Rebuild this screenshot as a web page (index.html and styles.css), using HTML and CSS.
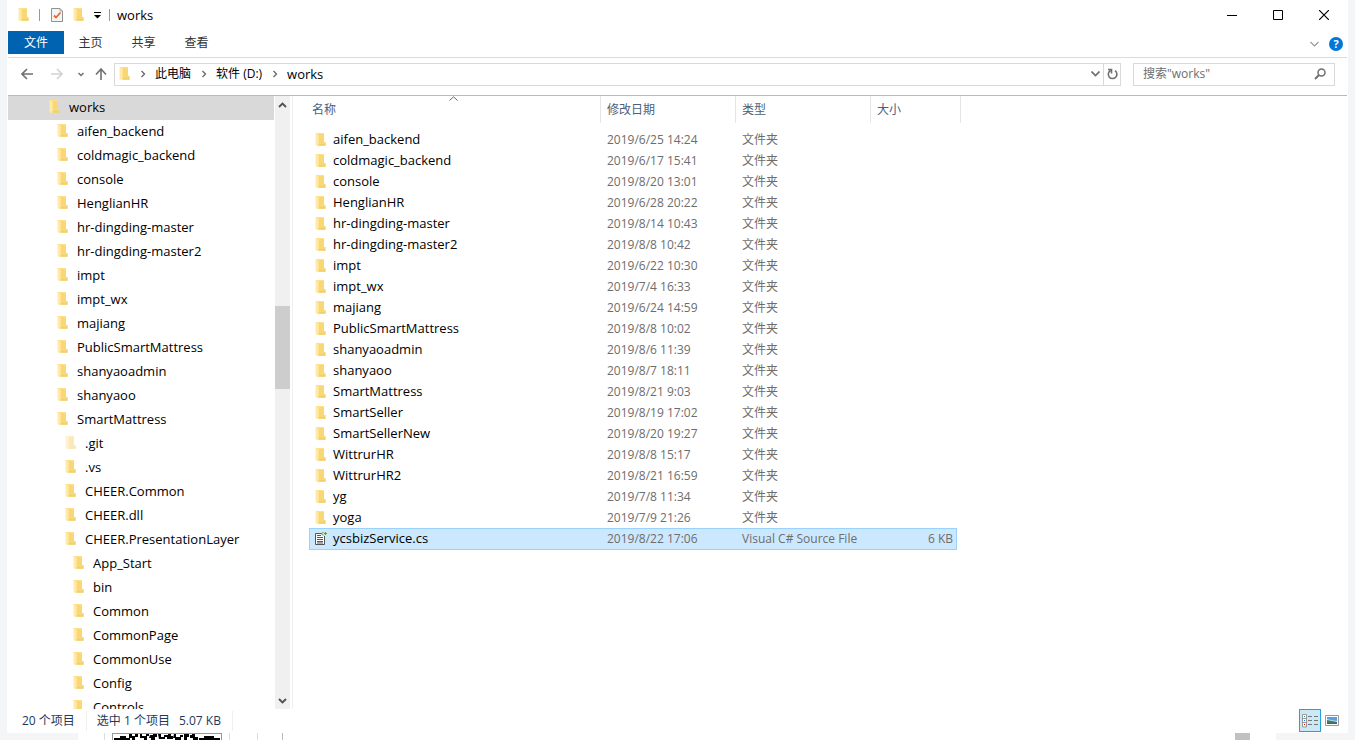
FILE: index.html
```html
<!DOCTYPE html>
<html lang="zh-CN">
<head>
<meta charset="utf-8">
<title>works</title>
<link rel="stylesheet" href="styles.css">
</head>
<body>
<svg class="sprite" aria-hidden="true">
  <symbol id="folder" viewBox="0 0 11 14">
    <path d="M1 0h8v9h1.500v3.500H3.500L1 12z" fill="#ffdf87"/>
    <path d="M3.500 1H9v8h1.500v3.500H3.500z" fill="#f8d775"/>
    <path d="M0.500 0L3.500 1.500V13.500L0.500 12z" fill="#ffe9a8"/>
    <path d="M3.500 11.500h7v1h-7z" fill="#edc85f"/>
  </symbol>
  <symbol id="crumb" viewBox="0 0 6 8"><path d="M1.500 1L4.500 4L1.500 7" fill="none" stroke="#666" stroke-width="1.300"/></symbol>
</svg>
<main class="window">
  <header class="titlebar">
    <svg class="folder"><use href="#folder"/></svg>
    <span class="divider"></span>
    <button class="tool" aria-label="属性"><svg width="12" height="14" viewBox="0 0 12 14"><path d="M.5.5h8.500l2.500 2.500v10.500H.5z" fill="#f4f4f4" stroke="#919191"/><path d="M9 .5V3h2.500" fill="none" stroke="#aaa"/><path d="M3 7.500L5 9.500L9.500 4.500" fill="none" stroke="#e8682c" stroke-width="1.800"/></svg></button>
    <button class="tool" aria-label="新建文件夹"><svg class="folder"><use href="#folder"/></svg></button>
    <button class="tool menu" aria-label="自定义快速访问工具栏"><svg width="7" height="7" viewBox="0 0 7 7"><path d="M0 0h7v1H0zM0 3h7L3.500 6.500z"/></svg></button>
    <span class="divider"></span>
    <h1 class="title">works</h1>
    <div class="controls">
      <button aria-label="最小化"><svg width="10" height="10"><path d="M0 5h10v1H0z"/></svg></button>
      <button aria-label="最大化"><svg width="10" height="10"><path d="M.5.5h9v9h-9z" fill="none" stroke="#000"/></svg></button>
      <button aria-label="关闭"><svg width="10" height="10"><path d="M0 0L10 10M10 0L0 10" fill="none" stroke="#000" stroke-width="1.200"/></svg></button>
    </div>
  </header>
  <nav class="ribbon">
    <button class="tab file">文件</button>
    <button class="tab">主页</button>
    <button class="tab">共享</button>
    <button class="tab">查看</button>
    <div class="ribbon-end">
      <button class="tool" aria-label="展开功能区"><svg width="9" height="6"><path d="M.5 1L4.500 5L8.500 1" fill="none" stroke="#999" stroke-width="1.200"/></svg></button>
      <button class="help" aria-label="帮助">?</button>
    </div>
  </nav>
  <div class="location">
    <div class="history">
      <button class="tool" aria-label="后退"><svg width="12" height="12"><path d="M12 6H1.500M6 1L1 6L6 11" fill="none" stroke="#707070" stroke-width="1.600"/></svg></button>
      <button class="tool" aria-label="前进"><svg width="12" height="12"><path d="M0 6H10.500M6 1L11 6L6 11" fill="none" stroke="#d2d2d2" stroke-width="1.600"/></svg></button>
      <button class="tool" aria-label="最近位置"><svg width="6" height="5"><path d="M.5 1L3 3.500L5.500 1" fill="none" stroke="#707070" stroke-width="1.500"/></svg></button>
      <button class="tool" aria-label="上移"><svg width="12" height="12"><path d="M6 12V1.500M1 6.500L6 1L11 6.500" fill="none" stroke="#707070" stroke-width="1.600"/></svg></button>
    </div>
    <div class="address">
      <svg class="folder"><use href="#folder"/></svg>
      <svg class="crumb"><use href="#crumb"/></svg>
      <a href="#pc">此电脑</a>
      <svg class="crumb"><use href="#crumb"/></svg>
      <a href="#d">软件 (D:)</a>
      <svg class="crumb"><use href="#crumb"/></svg>
      <a class="here" href="#works">works</a>
      <button class="drop" aria-label="以前的位置"><svg width="9" height="6"><path d="M.5.500L4.500 4.500L8.500.500" fill="none" stroke="#707070" stroke-width="1.700"/></svg></button>
      <button class="refresh" aria-label="刷新"><svg width="11" height="12"><path d="M3.500 2.500A4.300 4.300 0 1 0 8 2.700M1 1.500H4.500V5.500" fill="none" stroke="#707070" stroke-width="1.600"/></svg></button>
    </div>
    <label class="search">
      <input type="text" placeholder='搜索"works"' aria-label="搜索">
      <svg width="12" height="12"><circle cx="7.500" cy="4.500" r="3.500" fill="none" stroke="#707070" stroke-width="1.500"/><path d="M5 7L1 11" stroke="#707070" stroke-width="2"/></svg>
    </label>
  </div>
  <div class="content">
    <ul class="tree">
      <li class="current"><svg class="folder"><use href="#folder"/></svg>works</li>
      <li class="l1"><svg class="folder"><use href="#folder"/></svg>aifen_backend</li>
      <li class="l1"><svg class="folder"><use href="#folder"/></svg>coldmagic_backend</li>
      <li class="l1"><svg class="folder"><use href="#folder"/></svg>console</li>
      <li class="l1"><svg class="folder"><use href="#folder"/></svg>HenglianHR</li>
      <li class="l1"><svg class="folder"><use href="#folder"/></svg>hr-dingding-master</li>
      <li class="l1"><svg class="folder"><use href="#folder"/></svg>hr-dingding-master2</li>
      <li class="l1"><svg class="folder"><use href="#folder"/></svg>impt</li>
      <li class="l1"><svg class="folder"><use href="#folder"/></svg>impt_wx</li>
      <li class="l1"><svg class="folder"><use href="#folder"/></svg>majiang</li>
      <li class="l1"><svg class="folder"><use href="#folder"/></svg>PublicSmartMattress</li>
      <li class="l1"><svg class="folder"><use href="#folder"/></svg>shanyaoadmin</li>
      <li class="l1"><svg class="folder"><use href="#folder"/></svg>shanyaoo</li>
      <li class="l1"><svg class="folder"><use href="#folder"/></svg>SmartMattress</li>
      <li class="l2"><svg class="folder hidden-item"><use href="#folder"/></svg>.git</li>
      <li class="l2"><svg class="folder"><use href="#folder"/></svg>.vs</li>
      <li class="l2"><svg class="folder"><use href="#folder"/></svg>CHEER.Common</li>
      <li class="l2"><svg class="folder"><use href="#folder"/></svg>CHEER.dll</li>
      <li class="l2"><svg class="folder"><use href="#folder"/></svg>CHEER.PresentationLayer</li>
      <li class="l3"><svg class="folder"><use href="#folder"/></svg>App_Start</li>
      <li class="l3"><svg class="folder"><use href="#folder"/></svg>bin</li>
      <li class="l3"><svg class="folder"><use href="#folder"/></svg>Common</li>
      <li class="l3"><svg class="folder"><use href="#folder"/></svg>CommonPage</li>
      <li class="l3"><svg class="folder"><use href="#folder"/></svg>CommonUse</li>
      <li class="l3"><svg class="folder"><use href="#folder"/></svg>Config</li>
      <li class="l3"><svg class="folder"><use href="#folder"/></svg>Controls</li>
    </ul>
    <div class="scrollbar">
      <button aria-label="向上滚动"><svg width="9" height="6"><path d="M1 5L4.500 1.500L8 5" fill="none" stroke="#505050" stroke-width="1.800"/></svg></button>
      <div class="track"><div class="thumb"></div></div>
      <button aria-label="向下滚动"><svg width="9" height="6"><path d="M1 1L4.500 4.500L8 1" fill="none" stroke="#505050" stroke-width="1.800"/></svg></button>
    </div>
    <section class="files">
      <table>
        <colgroup><col class="c-name"><col class="c-date"><col class="c-type"><col class="c-size"><col class="c-end"></colgroup>
        <thead><tr>
          <th><button>名称</button><svg class="sort" width="9" height="5"><path d="M.5 4.500L4.500.800L8.500 4.500" fill="none" stroke="#666"/></svg></th>
          <th><button>修改日期</button></th>
          <th><button>类型</button></th>
          <th colspan="2"><button>大小</button></th>
        </tr></thead>
        <tbody>
          <tr><td><svg class="folder"><use href="#folder"/></svg>aifen_backend</td><td>2019/6/25 14:24</td><td>文件夹</td><td></td><td></td></tr>
          <tr><td><svg class="folder"><use href="#folder"/></svg>coldmagic_backend</td><td>2019/6/17 15:41</td><td>文件夹</td><td></td><td></td></tr>
          <tr><td><svg class="folder"><use href="#folder"/></svg>console</td><td>2019/8/20 13:01</td><td>文件夹</td><td></td><td></td></tr>
          <tr><td><svg class="folder"><use href="#folder"/></svg>HenglianHR</td><td>2019/6/28 20:22</td><td>文件夹</td><td></td><td></td></tr>
          <tr><td><svg class="folder"><use href="#folder"/></svg>hr-dingding-master</td><td>2019/8/14 10:43</td><td>文件夹</td><td></td><td></td></tr>
          <tr><td><svg class="folder"><use href="#folder"/></svg>hr-dingding-master2</td><td>2019/8/8 10:42</td><td>文件夹</td><td></td><td></td></tr>
          <tr><td><svg class="folder"><use href="#folder"/></svg>impt</td><td>2019/6/22 10:30</td><td>文件夹</td><td></td><td></td></tr>
          <tr><td><svg class="folder"><use href="#folder"/></svg>impt_wx</td><td>2019/7/4 16:33</td><td>文件夹</td><td></td><td></td></tr>
          <tr><td><svg class="folder"><use href="#folder"/></svg>majiang</td><td>2019/6/24 14:59</td><td>文件夹</td><td></td><td></td></tr>
          <tr><td><svg class="folder"><use href="#folder"/></svg>PublicSmartMattress</td><td>2019/8/8 10:02</td><td>文件夹</td><td></td><td></td></tr>
          <tr><td><svg class="folder"><use href="#folder"/></svg>shanyaoadmin</td><td>2019/8/6 11:39</td><td>文件夹</td><td></td><td></td></tr>
          <tr><td><svg class="folder"><use href="#folder"/></svg>shanyaoo</td><td>2019/8/7 18:11</td><td>文件夹</td><td></td><td></td></tr>
          <tr><td><svg class="folder"><use href="#folder"/></svg>SmartMattress</td><td>2019/8/21 9:03</td><td>文件夹</td><td></td><td></td></tr>
          <tr><td><svg class="folder"><use href="#folder"/></svg>SmartSeller</td><td>2019/8/19 17:02</td><td>文件夹</td><td></td><td></td></tr>
          <tr><td><svg class="folder"><use href="#folder"/></svg>SmartSellerNew</td><td>2019/8/20 19:27</td><td>文件夹</td><td></td><td></td></tr>
          <tr><td><svg class="folder"><use href="#folder"/></svg>WittrurHR</td><td>2019/8/8 15:17</td><td>文件夹</td><td></td><td></td></tr>
          <tr><td><svg class="folder"><use href="#folder"/></svg>WittrurHR2</td><td>2019/8/21 16:59</td><td>文件夹</td><td></td><td></td></tr>
          <tr><td><svg class="folder"><use href="#folder"/></svg>yg</td><td>2019/7/8 11:34</td><td>文件夹</td><td></td><td></td></tr>
          <tr><td><svg class="folder"><use href="#folder"/></svg>yoga</td><td>2019/7/9 21:26</td><td>文件夹</td><td></td><td></td></tr>
          <tr class="selected"><td><svg class="source" width="12" height="14"><path d="M.5 1.500h9v11h-9z" fill="#fff" stroke="#555"/><path d="M2 3.500h4M2 5.500h6M2 7.500h6M2 9.500h6M2 11h6" stroke="#555"/><path d="M6 0h6v4H8z" fill="#d5ead5"/><path d="M8.500.500C6 .500 6 3.500 8.500 3M9 1.500h3M10.500 0v3" fill="none" stroke="#4b9b57"/></svg>ycsbizService.cs</td><td>2019/8/22 17:06</td><td>Visual C# Source File</td><td>6 KB</td><td></td></tr>
        </tbody>
      </table>
    </section>
  </div>
  <footer class="status">
    <span class="count">20 个项目</span>
    <span class="picked">选中 1 个项目</span>
    <span class="size">5.07 KB</span>
    <div class="views">
      <button class="view active" aria-label="详细信息"><svg width="16" height="14"><path d="M.5.5h4v12.500h-4zM.5 4.500h4M.5 8.500h4" fill="#fff" stroke="#999"/><path d="M2 2h1v1H2z" fill="#396"/><path d="M2 6h1v1H2z" fill="#36f"/><path d="M2 10h1v1H2z" fill="#e00"/><path d="M6 2.500h4M12 2.500h4M6 6.500h4M12 6.500h4M6 10.500h4M12 10.500h4" stroke="#777"/></svg></button>
      <button class="view" aria-label="大图标"><svg width="14" height="11"><path d="M.5.5h13v10H.5z" fill="#fff" stroke="#999"/><path d="M2 2h10v7H2z" fill="#5b9de0"/><path d="M2 4l4 1 6 1v1H2z" fill="#c7e2f4"/><path d="M2 5l5 1 5 1v1H2z" fill="#467a5b"/><path d="M2 8h10v1H2z" fill="#29649c"/></svg></button>
    </div>
  </footer>
</main>
<div class="behind" aria-hidden="true">
  <svg class="qr" width="180" height="7"><path d="M.5 0v7M125.500 0v7M153.500 0v7" stroke="#ddd"/><path d="M178.500 0v7" stroke="#bbb"/><path d="M8 .5h110M8.500 0v7M117.500 0v7" stroke="#999"/><path d="M10 5h6v-2h6v2h4v2H10zM25 1h3v2h3v-2h3v3h-3v3h-3v-2h-3zM36 1h2v2h4v-2h3v2h-2v4h-3v-2h-4zM46 2h3v-1h4v3h-2v3h-4v-2h-2zM54 1h3v3h4v2h-6zM60 2h4v-1h3v2h2v3h-6v-2h-3zM70 1h2v3h4v-2h3v2h-2v3h-6v-2h-2zM80 1h5v3h-2v3h-3zM86 2h2v-1h3v3h3v3h-5v-2h-3zM95 5h5v-2h10v2h6v2H95z"/></svg>
  <span class="block"></span>
</div>
</body>
</html>
```
FILE: styles.css
```css
* { box-sizing: border-box; }
html, body { height: 100%; margin: 0; }
body {
  display: flex;
  flex-direction: column;
  overflow: hidden;
  background: #f4f5f7;
  color: #000;
  font: 13px/20px "Open Sans", "Noto Sans CJK SC", sans-serif;
}
button { padding: 0; border: 0; background: none; color: inherit; font: inherit; }
svg { display: block; flex: none; }
a { color: inherit; text-decoration: none; }
.sprite { position: absolute; width: 0; height: 0; }
.folder { width: 11px; height: 14px; }
.hidden-item { opacity: 0.5; }
.tool { display: flex; align-items: center; }

.window {
  display: flex;
  flex: 1;
  flex-direction: column;
  min-height: 0;
  margin: 0 7px;
  padding: 0 1px;
  background: #fff;
}
.titlebar { display: flex; flex: none; align-items: center; height: 31px; padding: 0 0 1px 10px; }
.divider { width: 1px; height: 12px; margin: 0 11px 0 10px; background: #999; }
.titlebar .tool + .tool { margin-left: 10px; }
.menu + .divider { margin: 0 7px 0 8px; }
.title { margin: 0; font-size: 13px; font-weight: 400; }
.controls { display: flex; margin-left: auto; }
.controls button { display: flex; align-items: center; justify-content: center; width: 46px; height: 30px; }

.ribbon { display: flex; flex: none; height: 27px; border-bottom: 1px solid #dadbdc; color: #333; font-size: 12px; }
.tab { width: 53px; height: 23px; padding-top: 1px; }
.file { width: 56px; background: #0063b1; color: #fff; }
.ribbon-end { display: flex; align-items: center; gap: 10px; margin-left: auto; padding-right: 4px; }
.help { width: 14px; height: 14px; border-radius: 50%; background: #0078d7; color: #fff; font-size: 11px; font-weight: 700; line-height: 14px; }

.location { display: flex; flex: none; align-items: center; height: 38px; padding: 0 12px 5px 0; border-bottom: 1px solid #b9b9b9; }
.history { display: flex; gap: 15px; padding: 0 7px 0 13px; }
.history .tool:nth-child(2) { margin-left: 3px; }
.history .tool:nth-child(4) { margin-left: -4px; }
.address { display: flex; flex: 1; align-items: center; height: 23px; padding-left: 4px; border: 1px solid #d9d9d9; font-size: 12px; }
.here { font-size: 13px; }
.crumb { width: 6px; height: 8px; margin: 0 9px 0 10px; }
.drop { margin-left: auto; padding: 0 3px; }
.refresh { display: flex; align-items: center; justify-content: center; width: 17px; height: 21px; border-left: 1px solid #d9d9d9; }
.search { display: flex; align-items: center; width: 202px; height: 23px; margin-left: 12px; padding: 0 8px 0 9px; border: 1px solid #d9d9d9; }
.search input { flex: 1; min-width: 0; padding: 0; border: 0; outline: 0; font: inherit; font-size: 12px; }
.search input::placeholder { color: #6d6d6d; }

.content { display: flex; flex: 1; min-height: 0; }
.tree { width: 267px; margin: 0; padding: 0; overflow: hidden; list-style: none; }
.tree li { display: flex; gap: 9px; align-items: center; height: 24px; margin-right: 1px; padding: 0 0 2px 41px; }
.tree .l1 { padding-left: 49px; }
.tree .l2 { padding-left: 57px; }
.tree .l3 { padding-left: 65px; }
.tree .current { background: #d9d9d9; }
.scrollbar { display: flex; flex-direction: column; width: 15px; background: #f0f0f0; }
.scrollbar button { display: flex; align-items: center; justify-content: center; height: 17px; }
.track { flex: 1; padding-top: 193px; }
.thumb { height: 83px; background: #cdcdcd; }
.files { flex: 1; min-width: 0; margin-left: 2px; padding-left: 16px; border-left: 1px solid #f0f0f0; overflow: hidden; }

table { width: 652px; table-layout: fixed; border-collapse: separate; border-spacing: 0; }
.c-name { width: 292px; }
.c-date, .c-type { width: 135px; }
.c-size { width: 86px; }
.c-end { width: 4px; }
th { position: relative; padding: 0 0 6px; font-weight: 400; }
th button { display: block; width: 100%; height: 27px; padding-left: 6px; border-right: 1px solid #e5e5e5; color: #4c607a; font-size: 12px; text-align: left; }
th:first-child button { padding-left: 3px; }
.sort { position: absolute; top: 0; left: 140px; }
td { height: 21px; padding: 0 0 0 6px; color: #6d6d6d; font-size: 12px; line-height: 19px; border: 0 solid transparent; border-width: 1px 0; vertical-align: top; white-space: nowrap; }
td:first-child { display: flex; gap: 7px; align-items: center; color: #000; font-size: 13px; }
td:nth-child(4) { padding: 0 3px 0 0; text-align: right; }
td:nth-child(5) { padding: 0; }
.selected td { height: 22px; border-color: #99d1ff; background: #cce8ff; }
.selected td:first-child { gap: 6px; padding: 0 0 1px 5px; border-left-width: 1px; }
.selected td:nth-child(4) { border-right-width: 1px; }
.selected td:nth-child(5) { border-color: transparent; background: none; }

.status { display: flex; flex: none; align-items: center; height: 24px; padding: 0 0 1px 14px; color: #1e395b; font-size: 12px; }
.count { padding-right: 11px; border-right: 1px solid #f0f0f0; }
.picked { padding-left: 10px; }
.size { padding: 0 11px 0 9px; border-right: 1px solid #f0f0f0; }
.views { display: flex; margin-left: auto; padding-right: 4px; }
.view { display: flex; align-items: center; justify-content: center; width: 22px; height: 23px; }
.active { border: 1px solid #26a0da; background: #cbe8f6; }

.behind { display: flex; flex: none; align-items: start; height: 7px; margin: 0 79px 0 78px; padding: 0 26px; background: #fff; }
.block { width: 15px; height: 7px; margin-left: auto; background: #c1c1c1; }
```
